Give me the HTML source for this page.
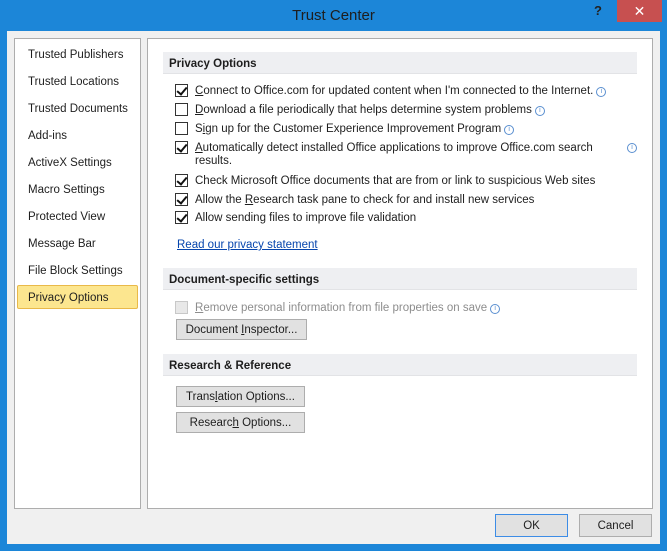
<!DOCTYPE html>
<html><head><style>
*{margin:0;padding:0;box-sizing:border-box}
body{width:667px;height:551px;background:#1c86d8;font-family:"Liberation Sans",sans-serif;font-size:11.5px;color:#1e1e1e;position:relative;overflow:hidden}
.abs{position:absolute}
.title{left:0;top:7px;width:667px;text-align:center;font-size:15px;color:#1e1e1e}
.close{left:617px;top:0;width:45px;height:22px;background:#c75050;color:#fff;text-align:center;font-size:14px;line-height:22px}
.help{left:594px;top:3px;font-weight:bold;font-size:13px;color:#222}
.client{left:7px;top:31px;width:653px;height:513px;background:#f0f0f0}
.panel{background:#fff;border:1px solid #adadad}
.nav{left:28px;font-size:11.5px;margin-top:2px}
.sel{left:17px;top:285px;width:121px;height:24px;background:#fce68f;border:1px solid #e9b949;border-radius:2px}
.hdr{left:163px;width:474px;height:22px;background:#eeeff2;border-bottom:1px solid #e2e3e6;font-weight:bold;padding:6px 0 0 6px;font-size:11.5px}
.cb{left:175px;width:13px;height:13px;border:1px solid #333;background:#fff}
.cb.on::after{content:"";position:absolute;left:3px;top:0px;width:4px;height:8px;border:solid #111;border-width:0 2px 2px 0;transform:rotate(40deg)}
.lbl{left:195px;margin-top:1px}
.i{display:inline-block;width:10px;height:10px;border:1px solid #5a8fd0;border-radius:50%;font-size:7px;line-height:8px;text-align:center;color:#5a8fd0;vertical-align:1px;margin-left:3px}
.btn{background:#e1e1e1;border:1px solid #adadad;text-align:center;line-height:21px;height:21px}
u{text-decoration:underline}
</style></head><body>
<div class="abs title">Trust Center</div>
<div class="abs help">?</div>
<div class="abs close">✕</div>
<div class="abs client"></div>
<div class="abs panel" style="left:14px;top:38px;width:127px;height:471px"></div>
<div class="abs panel" style="left:147px;top:38px;width:506px;height:471px"></div>
<div class="abs sel"></div>
<div class="abs nav" style="top:47px">Trusted Publishers</div>
<div class="abs nav" style="top:74px">Trusted Locations</div>
<div class="abs nav" style="top:101px">Trusted Documents</div>
<div class="abs nav" style="top:128px">Add-ins</div>
<div class="abs nav" style="top:155px">ActiveX Settings</div>
<div class="abs nav" style="top:182px">Macro Settings</div>
<div class="abs nav" style="top:209px">Protected View</div>
<div class="abs nav" style="top:236px">Message Bar</div>
<div class="abs nav" style="top:263px">File Block Settings</div>
<div class="abs nav" style="top:290px">Privacy Options</div>

<div class="abs hdr" style="top:52px">Privacy Options</div>
<div class="abs cb on" style="top:84px"></div><div class="abs lbl" style="top:84px"><u>C</u>onnect to Office.com for updated content when I'm connected to the Internet.<span class="i">i</span></div>
<div class="abs cb" style="top:103px"></div><div class="abs lbl" style="top:103px"><u>D</u>ownload a file periodically that helps determine system problems<span class="i">i</span></div>
<div class="abs cb" style="top:122px"></div><div class="abs lbl" style="top:122px">S<u>i</u>gn up for the Customer Experience Improvement Program<span class="i">i</span></div>
<div class="abs cb on" style="top:141px"></div><div class="abs lbl" style="top:141px;width:420px;line-height:13px"><u>A</u>utomatically detect installed Office applications to improve Office.com search results.</div><div class="abs" style="left:624px;top:141px"><span class="i">i</span></div>
<div class="abs cb on" style="top:174px"></div><div class="abs lbl" style="top:174px">Check Microsoft Office documents that are from or link to suspicious Web sites</div>
<div class="abs cb on" style="top:193px"></div><div class="abs lbl" style="top:193px">Allow the <u>R</u>esearch task pane to check for and install new services</div>
<div class="abs cb on" style="top:211px"></div><div class="abs lbl" style="top:211px">Allow sending files to improve file validation</div>
<div class="abs" style="left:177px;top:239px;color:#0645ad;text-decoration:underline">Read our privacy statement</div>

<div class="abs hdr" style="top:268px">Document-specific settings</div>
<div class="abs cb" style="top:301px;border-color:#c8c8c8;background:#e8e8e8"></div><div class="abs lbl" style="top:301px;color:#8d8d8d"><u>R</u>emove personal information from file properties on save<span class="i">i</span></div>
<div class="abs btn" style="left:176px;top:319px;width:131px">Document <u>I</u>nspector...</div>

<div class="abs hdr" style="top:354px">Research &amp; Reference</div>
<div class="abs btn" style="left:176px;top:386px;width:129px">Trans<u>l</u>ation Options...</div>
<div class="abs btn" style="left:176px;top:412px;width:129px">Researc<u>h</u> Options...</div>

<div class="abs btn" style="left:495px;top:514px;width:73px;height:23px;line-height:23px;border-color:#3c8ce6">OK</div>
<div class="abs btn" style="left:579px;top:514px;width:73px;height:23px;line-height:23px">Cancel</div>
</body></html>
